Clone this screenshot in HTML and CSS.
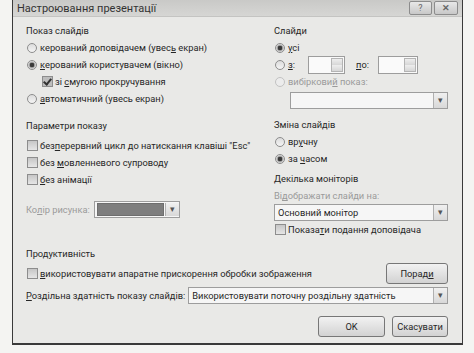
FILE: index.html
```html
<!DOCTYPE html>
<html><head><meta charset="UTF-8">
<title>Настроювання презентації</title>
<link rel="stylesheet" href="styles.css">
</head>
<body>
  <div class="dialog">
    <div class="titlebar">
      <span class="title">Настроювання презентації</span>
      <span class="tbtn">?</span>
      <span class="tbtn close">✕</span>
    </div>

    <div class="cols">
      <div class="col left">
        <div class="head">Показ слайдів</div>
        <div class="row"><span class="radio"></span><span>керований доповідачем (увес<u>ь</u> екран)</span></div>
        <div class="row"><span class="radio on"></span><span><u>к</u>ерований користувачем (вікно)</span></div>
        <div class="row sub"><span class="check on"></span><span>зі <u>с</u>мугою прокручування</span></div>
        <div class="row"><span class="radio"></span><span><u>а</u>втоматичний (увесь екран)</span></div>

        <div class="head gap1">Параметри показу</div>
        <div class="row"><span class="check"></span><span>без<u>п</u>ерервний цикл до натискання клавіші "Esc"</span></div>
        <div class="row"><span class="check"></span><span>без <u>м</u>овленневого супроводу</span></div>
        <div class="row"><span class="check"></span><span><u>б</u>ез анімації</span></div>

        <div class="row pen">
          <span class="dim">Ко<u>л</u>ір рисунка:</span>
          <span class="combo color"><span class="swatch"></span><span class="arrow">▾</span></span>
        </div>
      </div>

      <div class="col right">
        <div class="head">Слайди</div>
        <div class="row"><span class="radio on"></span><span><u>у</u>сі</span></div>
        <div class="row range"><span class="radio"></span><span><u>з</u>:</span>
          <span class="spin"><span class="sbtn"></span></span>
          <span><u>п</u>о:</span>
          <span class="spin to"><span class="sbtn"></span></span>
        </div>
        <div class="row dim"><span class="radio off"></span><span>вибіркови<u>й</u> показ:</span></div>
        <div class="combo custom"><span class="arrow">▾</span></div>

        <div class="head gap2">Зміна слайдів</div>
        <div class="row"><span class="radio"></span><span>вр<u>у</u>чну</span></div>
        <div class="row"><span class="radio on"></span><span>за <u>ч</u>асом</span></div>

        <div class="head gap3">Декілька моніторів</div>
        <div class="row dim"><span>Ві<u>д</u>ображати слайди на:</span></div>
        <div class="combo monitor"><span class="val">Основний монітор</span><span class="arrow">▾</span></div>
        <div class="row"><span class="check"></span><span>Показа<u>т</u>и подання доповідача</span></div>
      </div>
    </div>

    <div class="bottom">
      <div class="head">Продуктивність</div>
      <div class="row perf">
        <span class="check"></span><span><u>в</u>икористовувати апаратне прискорення обробки зображення</span>
        <span class="btn tips">Порад<u>и</u></span>
      </div>
      <div class="row res">
        <span><u>Р</u>оздільна здатність показу слайдів:</span>
        <span class="combo resol"><span class="val">Використовувати поточну роздільну здатність</span><span class="arrow">▾</span></span>
      </div>
      <div class="actions">
        <span class="btn ok">OK</span>
        <span class="btn">Скасувати</span>
      </div>
    </div>
  </div>
</body></html>
```

FILE: styles.css
```css
body {
  margin: 0;
  background-color: #f4f4f2;
  font-family: Roboto, "Open Sans", sans-serif;
  font-size: 9.3px;
  color: #262626;
}

.dialog {
  width: 449px;
  height: 343px;
  margin-left: 12px;
  border: 1px solid #3a3a3a;
  border-top: none;
  border-bottom-width: 2px;
  background-color: #e9e9e7;
  box-sizing: content-box;
}

.titlebar {
  height: 16px;
  display: flex;
  align-items: center;
  padding: 0 4px 0 4px;
  background: linear-gradient(#c9c9c7, #d6d6d4);
  border-bottom: 1px solid #c4c4c2;
}

.title {
  flex: 1;
  color: #333;
  font-size: 11px;
}

.tbtn {
  width: 21px;
  height: 12px;
  margin-left: 2px;
  border: 1px solid #8c8c8c;
  border-radius: 2px;
  background: linear-gradient(#e8e8e8, #c8c8c8);
  font-size: 9px;
  line-height: 12px;
  text-align: center;
  color: #666;
}

.tbtn.close {
  width: 22px;
  font-weight: bold;
}

.cols {
  display: grid;
  grid-template-columns: minmax(0, 1fr) 174px;
  column-gap: 10px;
  padding: 5px 14px 0 13px;
}

.head {
  height: 17px;
  line-height: 17px;
}

.gap1 { margin-top: 10px; margin-bottom: 3px; }
.gap2 { margin-top: 7px; }
.gap3 { margin-top: 3px; }

.row {
  height: 17px;
  display: flex;
  align-items: center;
  white-space: nowrap;
}

.sub {
  padding-left: 15px;
}

.dim {
  color: #9a9a9a;
}

.radio, .check {
  display: inline-block;
  width: 8px;
  height: 8px;
  margin: 0 3px 0 1px;
  border: 1px solid #8d8d8d;
  background: linear-gradient(#dcdcdc, #f4f4f4);
  flex: none;
  box-sizing: content-box;
}

.radio {
  border-radius: 50%;
}

.radio.on {
  background: radial-gradient(circle, #3a3a3a 0 2px, #9a9a9a 2.5px, #e4e4e4 4px);
}

.radio.off {
  border-color: #c2c2c2;
  background: #ececec;
}

.check {
  width: 9px;
  height: 9px;
  margin-left: 1px;
  margin-right: 2px;
  background: linear-gradient(#c6c6c6, #e6e6e6);
}

.check.on {
  background: #bdbdbd;
  position: relative;
}

.check.on::after {
  content: "";
  position: absolute;
  left: 2px;
  top: 0;
  width: 3px;
  height: 6px;
  border: solid #333;
  border-width: 0 2px 2px 0;
  transform: rotate(40deg);
}

.combo {
  display: flex;
  align-items: center;
  border: 1px solid #9d9d9d;
  background-color: #f6f6f6;
  box-sizing: border-box;
}

.combo .arrow {
  width: 13px;
  height: 100%;
  margin-left: auto;
  border-left: 1px solid #b0b0b0;
  background: linear-gradient(#f0f0f0, #d8d8d8);
  color: #555;
  font-size: 9px;
  text-align: center;
  line-height: 14px;
}

.combo .val {
  padding-left: 3px;
}

.pen {
  height: 17px;
  margin-top: 13px;
}

.combo.color {
  width: 86px;
  height: 17px;
  margin-left: 4px;
  padding: 2px 0 2px 2px;
}

.combo.color .arrow {
  height: 13px;
  margin-left: 1px;
  line-height: 13px;
}

.swatch {
  flex: 1;
  height: 100%;
  background-color: #7e7e7e;
  border: 1px solid #6e6e6e;
}

.spin {
  display: inline-flex;
  justify-content: flex-end;
  width: 37px;
  height: 18px;
  margin: 0 11px 0 13px;
  border: 1px solid #9d9d9d;
  background-color: #fafafa;
  box-sizing: border-box;
  padding: 1px;
}

.spin.to {
  width: 40px;
  margin: 0 0 0 9px;
}

.sbtn {
  width: 10px;
  border: 1px solid #b4b4b4;
  background: linear-gradient(#eeeeee, #d6d6d6 50%, #eeeeee 50%, #d6d6d6);
}

.combo.custom {
  width: 158px;
  height: 17px;
  margin: 2px 0 0 16px;
}

.combo.monitor {
  width: 174px;
  height: 17px;
}

.bottom {
  padding: 7px 14px 0 13px;
}

.perf {
  height: 21px;
  margin-top: 1px;
}

.btn {
  display: inline-flex;
  align-items: center;
  justify-content: center;
  height: 21px;
  border: 1px solid #777;
  border-radius: 3px;
  background: linear-gradient(#f2f2f2, #d2d2d2);
  box-sizing: border-box;
  width: 56px;
}

.tips {
  margin-left: auto;
  width: 62px;
}

.res {
  margin-top: 3px;
}

.combo.resol {
  flex: 1;
  height: 17px;
  margin-left: 3px;
}

.actions {
  display: flex;
  justify-content: flex-end;
  gap: 7px;
  margin-top: 12px;
}

.btn.ok {
  width: 67px;
}
```
